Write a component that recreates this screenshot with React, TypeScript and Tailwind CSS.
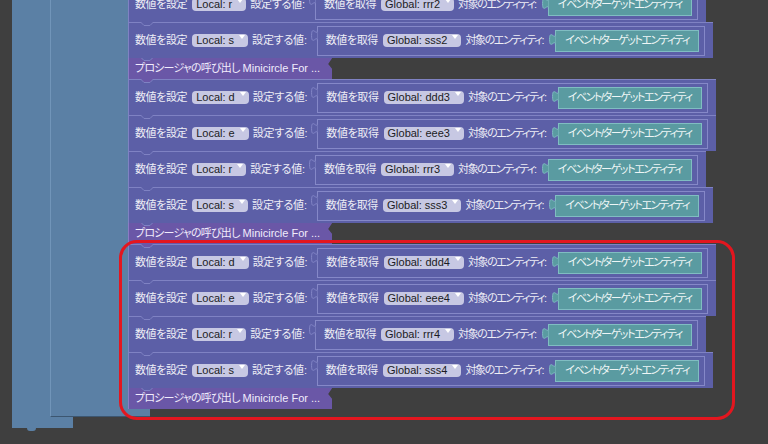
import React from "react";

const PURPLE = "#5c5fa7";
const PROC = "#6a57a7";

function Arrow() {
  return (
    <svg width="6" height="5" viewBox="0 0 6 5" className="ml-[5px] mt-[1px] shrink-0">
      <path d="M0 0 H6 L3 4 Z" fill="#ffffff" />
    </svg>
  );
}

function Dropdown({ label }: { label: string }) {
  return (
    <span className="flex h-[13px] items-start rounded-[4px] bg-[#c7c8e3] pl-[4px] pr-[3px] leading-[13px] text-[#1c1c24]">
      <span>{label}</span>
      <Arrow />
    </span>
  );
}

function Tab({ fill, stroke }: { fill: string; stroke: string }) {
  return (
    <svg width="7" height="11" viewBox="0 0 8 15" className="absolute -left-[7px] top-[3px] overflow-visible">
      <path d="M8,0 c0,10 -8,-8 -8,7.5 s8,-2.5 8,7.5" fill={fill} stroke={stroke} strokeWidth="1.3" />
    </svg>
  );
}

function Notch({ fill }: { fill: string }) {
  return (
    <svg width="12" height="5" viewBox="0 0 12 5" className="absolute -top-[1px] left-[12px]">
      <path d="M0 0 L3 3.5 H9 L12 0 Z" fill={fill} />
      <path d="M0 0.5 L3 3.5 H9 L12 0.5" fill="none" stroke="#7f82c3" strokeWidth="1" />
    </svg>
  );
}

function SetBlock({ local, global, prev }: { local: string; global: string; prev?: string }) {
  return (
    <div className="relative flex h-[36px] w-max items-center border-l border-t border-[#7f82c3] bg-[#5c5fa7] pl-[6px] pr-[8px] text-[#eeeef6]">
      {prev && <Notch fill={prev} />}
      <span className="tracking-[-0.4px]">数値を設定</span>
      <span className="ml-[5px]">
        <Dropdown label={`Local: ${local}`} />
      </span>
      <span className="ml-[4px] tracking-[-0.2px]">設定する値:</span>
      <div className="relative ml-[10px] flex h-[30px] items-center border border-[#8588c8] bg-[#5c5fa7] pl-[8px] pr-[5px]">
        <Tab fill={PURPLE} stroke="#8588c8" />
        <span className="tracking-[-0.4px]">数値を取得</span>
        <span className="ml-[5px]">
          <Dropdown label={`Global: ${global}`} />
        </span>
        <span className="ml-[4px] tracking-[-1.4px]">対象のエンティティ:</span>
        <div className="relative ml-[12px] flex h-[22px] items-center border border-[#80bdc2] bg-[#5a9ba1] px-[9px] text-[#eef6f6]">
          <Tab fill="#5a9ba1" stroke="#80bdc2" />
          <span className="tracking-[-1.4px]">イベント/ターゲットエンティティ</span>
        </div>
      </div>
    </div>
  );
}

function Proc() {
  return (
    <div className="relative flex h-[21px] w-max items-center border-l border-[#8a7bc4] bg-[#6a57a7] pl-[6px] pr-[12px] text-[#f1ecfc] [clip-path:polygon(0_0,100%_0,calc(100%_-_4px)_6px,100%_11px,100%_100%,0_100%)]">
      <Notch fill={PURPLE} />
      <span className="tracking-[-0.8px]">プロシージャの呼び出し</span>
      <span className="ml-[3px]">Minicircle For ...</span>
    </div>
  );
}

const groups: { local: string; global: string }[][] = [
  [
    { local: "r", global: "rrr2" },
    { local: "s", global: "sss2" },
  ],
  [
    { local: "d", global: "ddd3" },
    { local: "e", global: "eee3" },
    { local: "r", global: "rrr3" },
    { local: "s", global: "sss3" },
  ],
  [
    { local: "d", global: "ddd4" },
    { local: "e", global: "eee4" },
    { local: "r", global: "rrr4" },
    { local: "s", global: "sss4" },
  ],
];

export default function App() {
  return (
    <div className="relative h-[444px] w-[768px] overflow-hidden whitespace-nowrap bg-[#3f3f3f] font-['Liberation_Sans','Noto_Sans_CJK_JP',sans-serif] text-[11px] [font-feature-settings:'palt']">
      <div className="-mt-[14px] ml-[12px] flex w-max flex-col items-start">
        <div className="flex">
          <div className="w-[38px] bg-[#5b80a5]" />
          <div className="flex flex-col items-start">
            <div className="flex">
              <div className="w-[78px] border-l border-[#7195b9] bg-[#5b80a5]" />
              <div className="flex flex-col items-start">
                {groups.map((g, gi) => (
                  <React.Fragment key={gi}>
                    {g.map((b, bi) => (
                      <SetBlock
                        key={bi}
                        local={b.local}
                        global={b.global}
                        prev={gi === 0 && bi === 0 ? undefined : bi === 0 ? PROC : PURPLE}
                      />
                    ))}
                    <Proc />
                  </React.Fragment>
                ))}
              </div>
            </div>
            <div className="h-[8px] w-[100px] border-b border-l border-b-[#3c5670] border-l-[#7195b9] bg-[#5b80a5]" />
          </div>
        </div>
        <div className="h-[11px] w-[61px] bg-[#5b80a5]" />
        <div className="ml-[15px] h-[3px] w-[9px] rounded-b-[3px] bg-[#5b80a5]" />
      </div>
      <div className="absolute left-[119px] top-[240px] h-[180px] w-[616px] rounded-[18px] border-[3px] border-[#e3161f]" />
    </div>
  );
}
